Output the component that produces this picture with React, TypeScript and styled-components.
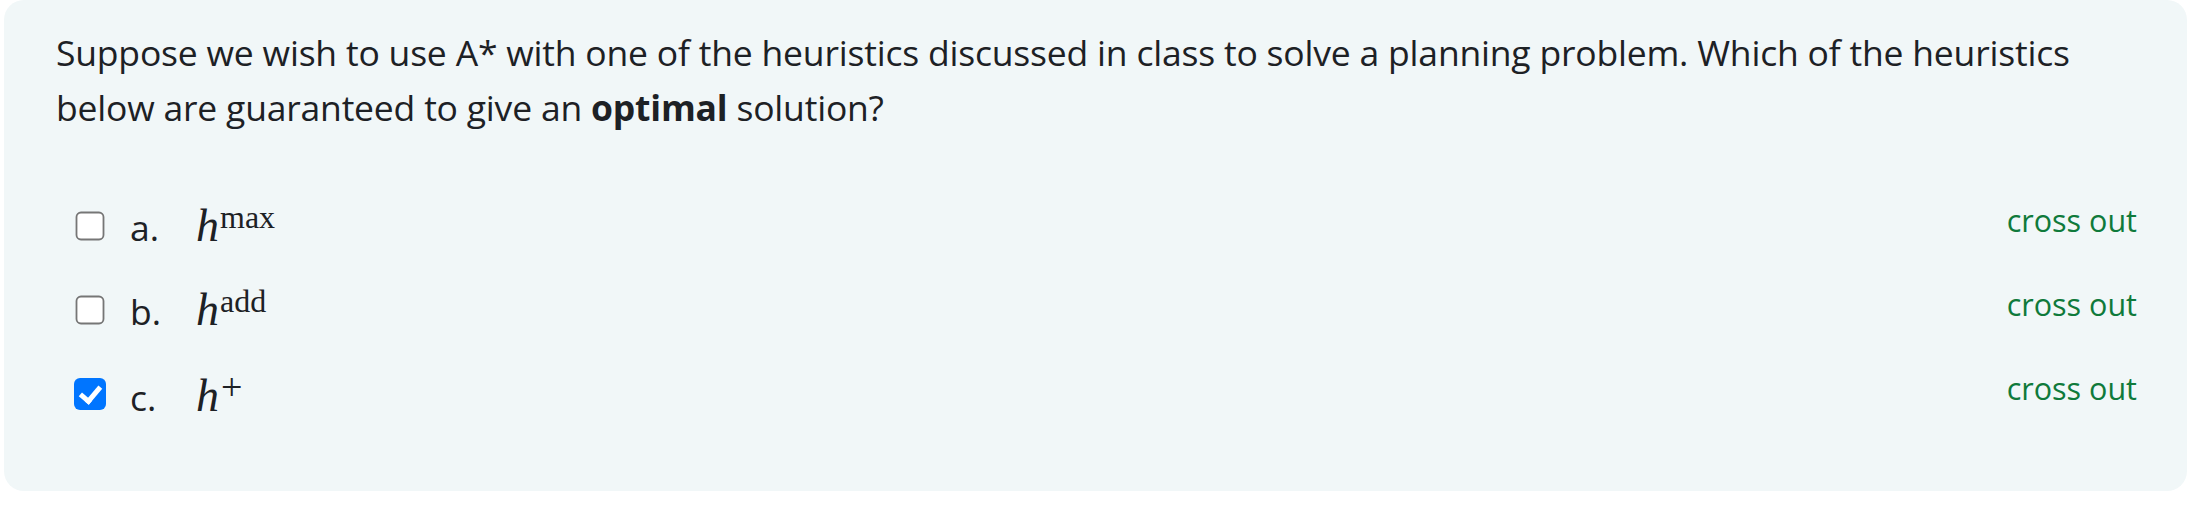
import { useState } from "react";
import styled, { createGlobalStyle } from "styled-components";

const GlobalStyle = createGlobalStyle`
  html, body {
    margin: 0;
    padding: 0;
    background: #ffffff;
  }
  body {
    font-family: "Open Sans", "Noto Sans", sans-serif;
    color: #1d2125;
  }
`;

const Formulation = styled.div`
  margin-left: 4px;
  background: #f1f7f8;
  border-radius: 20px;
  padding: 25px 50px 55px 52px;
  height: 491px;
  box-sizing: border-box;
`;

const QuestionText = styled.p`
  margin: 0;
  font-size: 35.5px;
  line-height: 55px;
  letter-spacing: -0.2px;

  strong {
    font-weight: 700;
  }
`;

const AnswerList = styled.div`
  margin-top: 49px;
  display: flex;
  flex-direction: column;
`;

const OptionRow = styled.div`
  height: 84px;
  display: flex;
  align-items: center;
  padding-left: 18px;
`;

const Box = styled.input`
  appearance: none;
  -webkit-appearance: none;
  position: relative;
  width: 32px;
  height: 32px;
  margin: 0 24px 0 0;
  flex: none;
  box-sizing: border-box;
  border: 2.8px solid #767676;
  border-radius: 6px;
  background: #ffffff;
  transform: scale(0.9);
  cursor: pointer;

  &:checked {
    transform: none;
    border: none;
    background: #0075ff;
  }

  &:checked::after {
    content: "";
    position: absolute;
    left: 10px;
    top: 4px;
    width: 8px;
    height: 16px;
    border: solid #ffffff;
    border-width: 0 5px 5px 0;
    transform: rotate(40deg);
  }
`;

const OptionBody = styled.label`
  display: block;
  font-size: 35.5px;
  white-space: nowrap;
`;

const Letter = styled.span`
  display: inline-block;
  width: 66px;
`;

const MathVar = styled.span`
  font-family: "Liberation Serif", "Times New Roman", serif;
  font-style: italic;
  font-size: 46px;
  line-height: 1;
`;

const MathSup = styled.span<{ $plus?: boolean }>`
  font-family: "Liberation Serif", "Times New Roman", serif;
  font-style: normal;
  font-size: ${(p) => (p.$plus ? "38px" : "32px")};
  line-height: 1;
  vertical-align: ${(p) => (p.$plus ? "11px" : "13px")};
  margin-left: ${(p) => (p.$plus ? "2px" : "1px")};
  font-weight: ${(p) => (p.$plus ? 300 : 400)};
`;

const CrossOut = styled.a`
  margin-left: auto;
  margin-bottom: 12px;
  font-size: 30.5px;
  color: #0f7a3b;
  text-decoration: none;
  cursor: pointer;
`;

const options = [
  { letter: "a.", sup: "max", plus: false },
  { letter: "b.", sup: "add", plus: false },
  { letter: "c.", sup: "+", plus: true },
];

export default function App() {
  const [checked, setChecked] = useState<boolean[]>([false, false, true]);

  const toggle = (i: number) => {
    setChecked((prev) => prev.map((v, j) => (j === i ? !v : v)));
  };

  return (
    <>
      <GlobalStyle />
      <Formulation>
        <QuestionText>
          Suppose we wish to use A* with one of the heuristics discussed in class
          to solve a planning problem. Which of the heuristics below are guaranteed
          to give an <strong>optimal</strong> solution?
        </QuestionText>
        <AnswerList>
          {options.map((o, i) => (
            <OptionRow key={o.letter}>
              <Box
                type="checkbox"
                id={`opt-${i}`}
                checked={checked[i]}
                onChange={() => toggle(i)}
              />
              <OptionBody htmlFor={`opt-${i}`}>
                <Letter>{o.letter}</Letter>
                <MathVar>h</MathVar>
                <MathSup $plus={o.plus}>{o.sup}</MathSup>
              </OptionBody>
              <CrossOut>cross out</CrossOut>
            </OptionRow>
          ))}
        </AnswerList>
      </Formulation>
    </>
  );
}
